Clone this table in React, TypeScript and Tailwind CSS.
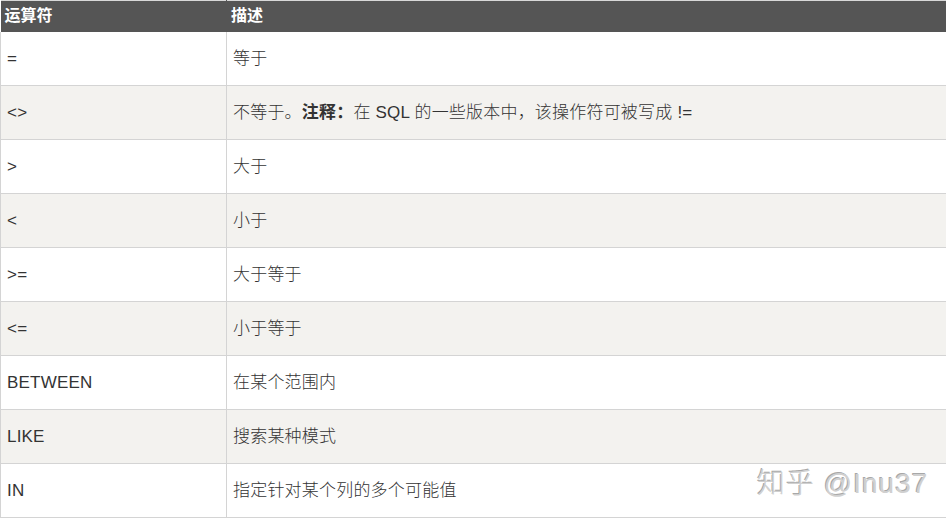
const rows: { op: string; desc: React.ReactNode }[] = [
  { op: '=', desc: '等于' },
  {
    op: '<>',
    desc: (
      <>
        不等于。<b className="font-bold">注释：</b>在 SQL 的一些版本中，该操作符可被写成 !=
      </>
    ),
  },
  { op: '>', desc: '大于' },
  { op: '<', desc: '小于' },
  { op: '>=', desc: '大于等于' },
  { op: '<=', desc: '小于等于' },
  { op: 'BETWEEN', desc: '在某个范围内' },
  { op: 'LIKE', desc: '搜索某种模式' },
  { op: 'IN', desc: '指定针对某个列的多个可能值' },
];

export default function App() {
  return (
    <div
      className="relative h-[520px] w-[946px] overflow-hidden bg-white"
      style={{ fontFamily: '"Liberation Sans", "Noto Sans CJK SC", sans-serif' }}
    >
      <table className="w-[948px] border-collapse border-t border-[#d8d8d8] text-left">
        <thead>
          <tr className="h-[31px] bg-[#555555] text-[16px] font-bold text-white">
            <th className="w-[226px] px-[4px] align-middle">运算符</th>
            <th className="border-l border-[#555555] px-[4px] align-middle">描述</th>
          </tr>
        </thead>
        <tbody className="text-[17px] font-light tracking-[0.2px] text-[#333333]">
          {rows.map((row, i) => (
            <tr key={row.op} className={`h-[54px] border-b border-[#d4d4d4] ${i % 2 ? 'bg-[#f3f2ef]' : 'bg-white'}`}>
              <td className="border-l border-[#d4d4d4] px-[6px] align-middle">{row.op}</td>
              <td className="border-l border-[#d4d4d4] px-[6px] align-middle">{row.desc}</td>
            </tr>
          ))}
        </tbody>
      </table>
      <div
        className="absolute left-[757px] top-[463px] text-[28px] font-light tracking-[1px] text-[#d0d0d0]"
        style={{ textShadow: '1px 1px 0 #ffffff, -1px -1px 0 #a8a8a8' }}
      >
        知乎 @Inu37
      </div>
    </div>
  );
}
